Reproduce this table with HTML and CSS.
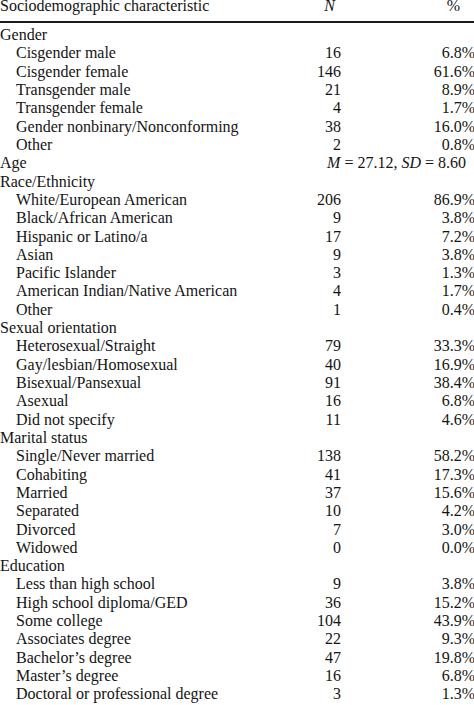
FILE: index.html
```html
<!DOCTYPE html>
<html lang="en">
<head>
<meta charset="utf-8">
<title>Sociodemographic characteristics</title>
<link rel="stylesheet" href="styles.css">
</head>
<body>
<table class="demo">
  <colgroup>
    <col class="c-label">
    <col class="c-n">
    <col class="c-pct">
  </colgroup>
  <thead>
    <tr>
      <th class="h-label">Sociodemographic characteristic</th>
      <th class="h-n"><i>N</i></th>
      <th class="h-pct">%</th>
    </tr>
  </thead>
  <tbody>
    <tr class="first"><td class="cat" colspan="3">Gender</td></tr>
    <tr><td class="sub">Cisgender male</td><td class="n">16</td><td class="pct">6.8%</td></tr>
    <tr><td class="sub">Cisgender female</td><td class="n">146</td><td class="pct">61.6%</td></tr>
    <tr><td class="sub">Transgender male</td><td class="n">21</td><td class="pct">8.9%</td></tr>
    <tr><td class="sub">Transgender female</td><td class="n">4</td><td class="pct">1.7%</td></tr>
    <tr><td class="sub">Gender nonbinary/Nonconforming</td><td class="n">38</td><td class="pct">16.0%</td></tr>
    <tr><td class="sub">Other</td><td class="n">2</td><td class="pct">0.8%</td></tr>
    <tr><td class="cat">Age</td><td class="stat" colspan="2"><i>M</i> = 27.12, <i>SD</i> = 8.60</td></tr>
    <tr><td class="cat" colspan="3">Race/Ethnicity</td></tr>
    <tr><td class="sub">White/European American</td><td class="n">206</td><td class="pct">86.9%</td></tr>
    <tr><td class="sub">Black/African American</td><td class="n">9</td><td class="pct">3.8%</td></tr>
    <tr><td class="sub">Hispanic or Latino/a</td><td class="n">17</td><td class="pct">7.2%</td></tr>
    <tr><td class="sub">Asian</td><td class="n">9</td><td class="pct">3.8%</td></tr>
    <tr><td class="sub">Pacific Islander</td><td class="n">3</td><td class="pct">1.3%</td></tr>
    <tr><td class="sub">American Indian/Native American</td><td class="n">4</td><td class="pct">1.7%</td></tr>
    <tr><td class="sub">Other</td><td class="n">1</td><td class="pct">0.4%</td></tr>
    <tr><td class="cat" colspan="3">Sexual orientation</td></tr>
    <tr><td class="sub">Heterosexual/Straight</td><td class="n">79</td><td class="pct">33.3%</td></tr>
    <tr><td class="sub">Gay/lesbian/Homosexual</td><td class="n">40</td><td class="pct">16.9%</td></tr>
    <tr><td class="sub">Bisexual/Pansexual</td><td class="n">91</td><td class="pct">38.4%</td></tr>
    <tr><td class="sub">Asexual</td><td class="n">16</td><td class="pct">6.8%</td></tr>
    <tr><td class="sub">Did not specify</td><td class="n">11</td><td class="pct">4.6%</td></tr>
    <tr><td class="cat" colspan="3">Marital status</td></tr>
    <tr><td class="sub">Single/Never married</td><td class="n">138</td><td class="pct">58.2%</td></tr>
    <tr><td class="sub">Cohabiting</td><td class="n">41</td><td class="pct">17.3%</td></tr>
    <tr><td class="sub">Married</td><td class="n">37</td><td class="pct">15.6%</td></tr>
    <tr><td class="sub">Separated</td><td class="n">10</td><td class="pct">4.2%</td></tr>
    <tr><td class="sub">Divorced</td><td class="n">7</td><td class="pct">3.0%</td></tr>
    <tr><td class="sub">Widowed</td><td class="n">0</td><td class="pct">0.0%</td></tr>
    <tr><td class="cat" colspan="3">Education</td></tr>
    <tr><td class="sub">Less than high school</td><td class="n">9</td><td class="pct">3.8%</td></tr>
    <tr><td class="sub">High school diploma/GED</td><td class="n">36</td><td class="pct">15.2%</td></tr>
    <tr><td class="sub">Some college</td><td class="n">104</td><td class="pct">43.9%</td></tr>
    <tr><td class="sub">Associates degree</td><td class="n">22</td><td class="pct">9.3%</td></tr>
    <tr><td class="sub">Bachelor’s degree</td><td class="n">47</td><td class="pct">19.8%</td></tr>
    <tr><td class="sub">Master’s degree</td><td class="n">16</td><td class="pct">6.8%</td></tr>
    <tr><td class="sub">Doctoral or professional degree</td><td class="n">3</td><td class="pct">1.3%</td></tr>
  </tbody>
</table>
</body>
</html>
```
FILE: styles.css
```css
html, body {
  margin: 0;
  padding: 0;
  background: #ffffff;
}
body {
  overflow: hidden;
  width: 474px;
  height: 705px;
}
.demo {
  table-layout: fixed;
  border-collapse: collapse;
  width: 475px;
  margin-top: -3.5px;
  font-family: "Liberation Serif", "Times New Roman", serif;
  font-size: 16px;
  line-height: 18.31px;
  color: #141414;
}
.c-label { width: 281px; }
.c-n { width: 60px; }
.c-pct { width: 134px; }
.demo th,
.demo td {
  padding: 0;
  font-weight: normal;
  white-space: nowrap;
}
.demo thead th {
  padding-bottom: 6.2px;
  border-bottom: 2px solid #1a1a1a;
}
.h-label {
  text-align: left;
  padding-left: 15px;
}
.h-n {
  text-align: right;
  padding-right: 6px !important;
}
.h-pct {
  text-align: right;
  padding-right: 15px !important;
}
.demo tbody tr.first td {
  padding-top: 3.1px;
}
.cat {
  text-align: left;
}
.sub {
  text-align: left;
  padding-left: 16px !important;
}
.n,
.pct {
  text-align: right;
}
.stat {
  text-align: right;
  padding-right: 9px !important;
}
```
